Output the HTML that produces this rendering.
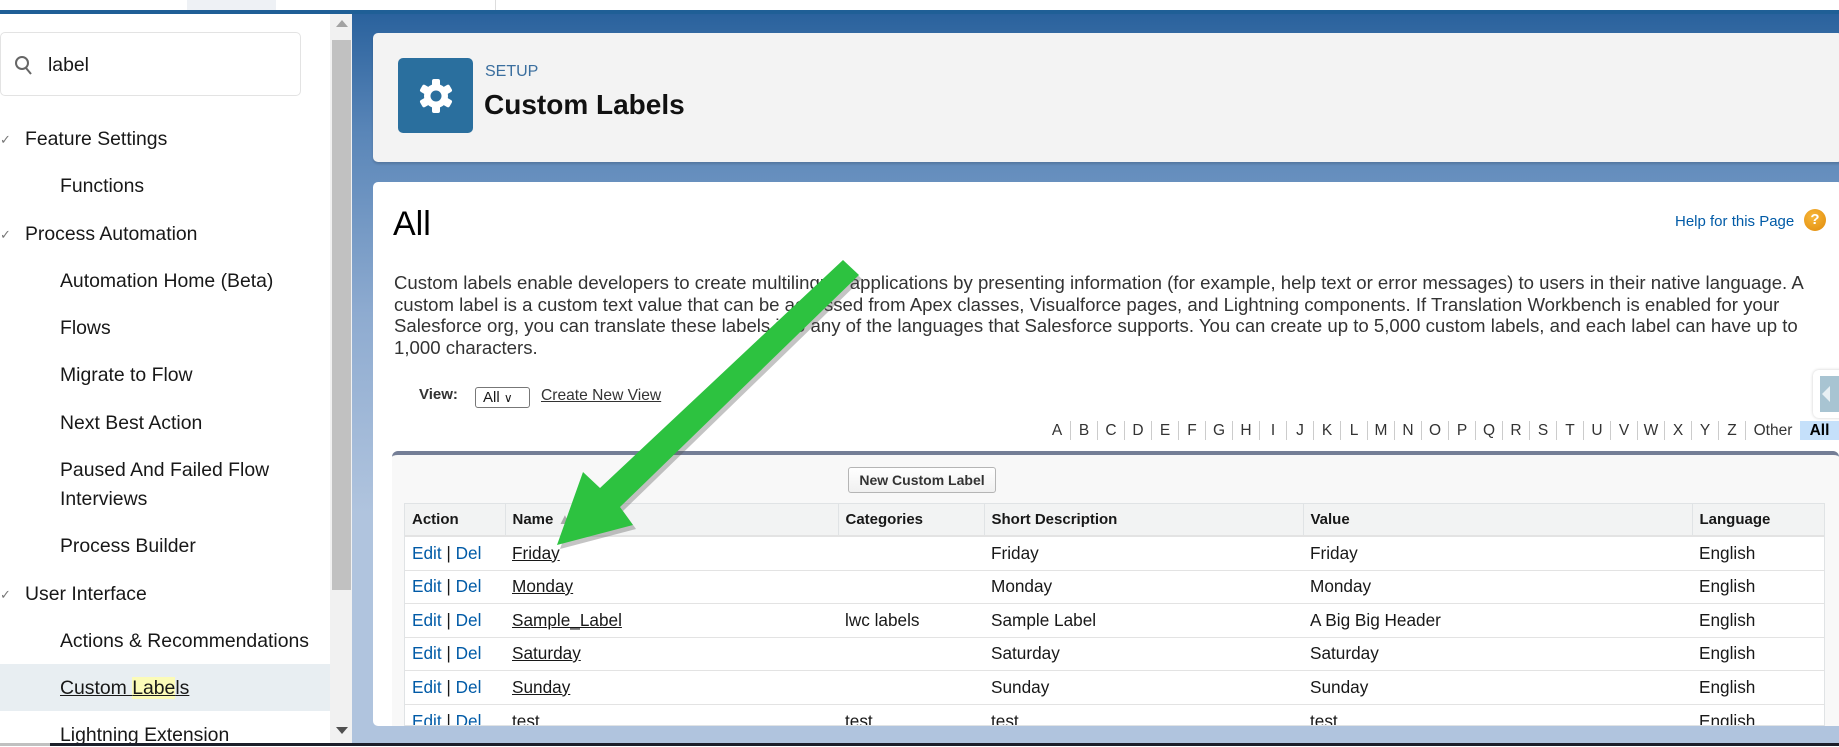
<!DOCTYPE html>
<html><head><meta charset="utf-8"><style>
*{margin:0;padding:0;box-sizing:border-box}
body{width:1839px;height:746px;overflow:hidden;position:relative;font-family:"Liberation Sans",Arial,sans-serif;background:#fff;color:#181818}
.abs{position:absolute}
.side{left:0;top:14px;width:330px;height:732px;background:#fff}
.si{position:absolute;font-size:19.4px;color:#181818;white-space:nowrap}
.chk{position:absolute;left:0;font-size:13px;color:#777}
.main{left:352px;top:14px;width:1487px;height:732px;background:linear-gradient(#2a629d 0px,#5a86b8 120px,#8eabd0 300px,#b0c4de 500px,#b0c4de 100%)}
table{border-collapse:collapse;font-size:17.2px}
td,th{text-align:left;padding-left:7px;white-space:nowrap}
a{color:#015ba7;text-decoration:none}
.u{text-decoration:underline;color:#181818}
.alpha{display:flex;font-size:15.5px;color:#333;line-height:19px;height:19px}
.alpha span{display:inline-block;width:27px;text-align:center;border-right:1px solid #ccc}
</style></head><body>
<div class="abs" style="left:0;top:0;width:1839px;height:10px;background:#fff"></div>
<div class="abs" style="left:187px;top:0;width:89px;height:10px;background:#eef1f5"></div>
<div class="abs" style="left:495px;top:0;width:1px;height:10px;background:#ddd"></div>
<div class="abs" style="left:0;top:10px;width:1839px;height:4px;background:#1f5f96"></div>

<div class="abs side">
  <div class="abs" style="left:0;top:18px;width:301px;height:64px;border:1px solid #e3e3e3;border-radius:5px"></div>
  <svg class="abs" style="left:14px;top:41px" width="20" height="22" viewBox="0 0 20 22"><circle cx="8" cy="8" r="6" fill="none" stroke="#666" stroke-width="2"/><line x1="12" y1="13" x2="17" y2="19" stroke="#666" stroke-width="2"/></svg>
  <div class="si" style="left:48px;top:40px">label</div>
  <div class="abs" style="left:0;top:650px;width:330px;height:47px;background:#e8eef2"></div>
</div>
<div class="abs" style="left:0;top:16px;width:330px;height:730px">
  <span class="chk" style="top:116px">✓</span><div class="si" style="left:25px;top:112px">Feature Settings</div>
  <div class="si" style="left:60px;top:159px">Functions</div>
  <span class="chk" style="top:211px">✓</span><div class="si" style="left:25px;top:207px">Process Automation</div>
  <div class="si" style="left:60px;top:254px">Automation Home (Beta)</div>
  <div class="si" style="left:60px;top:301px">Flows</div>
  <div class="si" style="left:60px;top:348px">Migrate to Flow</div>
  <div class="si" style="left:60px;top:396px">Next Best Action</div>
  <div class="si" style="left:60px;top:443px">Paused And Failed Flow</div>
  <div class="si" style="left:60px;top:472px">Interviews</div>
  <div class="si" style="left:60px;top:519px">Process Builder</div>
  <span class="chk" style="top:571px">✓</span><div class="si" style="left:25px;top:567px">User Interface</div>
  <div class="si" style="left:60px;top:614px">Actions &amp; Recommendations</div>
  <div class="si" style="left:60px;top:661px;text-decoration:underline">Custom <span style="background:#fbfbb8">Labe</span>ls</div>
  <div class="si" style="left:60px;top:708px">Lightning Extension</div>
</div>
<div class="abs" style="left:330px;top:14px;width:23px;height:732px;background:#f1f1f1"></div>
<div class="abs" style="left:332px;top:40px;width:19px;height:550px;background:#c1c1c1"></div>
<div class="abs" style="left:336px;top:20px;width:0;height:0;border-left:6px solid transparent;border-right:6px solid transparent;border-bottom:7px solid #a3a3a3"></div>
<div class="abs" style="left:336px;top:727px;width:0;height:0;border-left:6px solid transparent;border-right:6px solid transparent;border-top:7px solid #505050"></div>

<div class="abs main"></div>
<div class="abs" style="left:0;top:743px;width:1839px;height:3px;background:#1c1f2a"></div>
<div class="abs" style="left:0;top:743px;width:50px;height:3px;background:#c0c0c0"></div>

<div class="abs" style="left:373px;top:33px;width:1470px;height:129px;background:#f3f3f3;border-radius:5px;box-shadow:0 2px 2px rgba(0,0,0,.15)"></div>
<div class="abs" style="left:398px;top:58px;width:75px;height:75px;background:#2a6f9e;border-radius:5px"></div>
<svg class="abs" style="left:416px;top:76px" width="40" height="40" viewBox="0 0 40 40"><g fill="#fff"><circle cx="20" cy="20" r="12"/><rect x="16" y="3" width="8" height="34" rx="2"/><rect x="16" y="3" width="8" height="34" rx="2" transform="rotate(60 20 20)"/><rect x="16" y="3" width="8" height="34" rx="2" transform="rotate(120 20 20)"/></g><circle cx="20" cy="20" r="5.5" fill="#2a6f9e"/></svg>
<div class="abs" style="left:485px;top:63px;font-size:16px;color:#3a6e9e">SETUP</div>
<div class="abs" style="left:484px;top:89px;font-size:28px;font-weight:bold;color:#111">Custom Labels</div>

<div class="abs" style="left:373px;top:182px;width:1470px;height:544px;background:#fff;border-radius:5px"></div>
<div class="abs" style="left:393px;top:205px;font-size:34px;color:#000">All</div>
<div class="abs" style="left:1675px;top:213px;font-size:15px;color:#015ba7">Help for this Page</div>
<div class="abs" style="left:1804px;top:209px;width:22px;height:22px;border-radius:50%;background:radial-gradient(circle at 40% 35%,#f7b73a,#e08a0a);color:#fff;font-weight:bold;font-size:15px;text-align:center;line-height:22px">?</div>
<div class="abs" style="left:394px;top:272px;font-size:18.6px;line-height:21.7px;color:#333;white-space:nowrap">Custom labels enable developers to create multilingual applications by presenting information (for example, help text or error messages) to users in their native language. A<br>custom label is a custom text value that can be accessed from Apex classes, Visualforce pages, and Lightning components. If Translation Workbench is enabled for your<br>Salesforce org, you can translate these labels into any of the languages that Salesforce supports. You can create up to 5,000 custom labels, and each label can have up to<br>1,000 characters.</div>

<div class="abs" style="left:419px;top:386px;font-size:15px;font-weight:bold;color:#333">View:</div>
<div class="abs" style="left:475px;top:387px;width:55px;height:21px;border:1px solid #777;border-radius:3px;font-size:15px;padding-left:7px;line-height:19px">All <span style="font-size:12px">&#x2228;</span></div>
<div class="abs" style="left:541px;top:387px;font-size:15.6px;color:#333;text-decoration:underline">Create New View</div>

<div class="abs" style="left:1813px;top:370px;width:30px;height:48px;background:#fff;border-radius:6px 0 0 6px;box-shadow:0 0 3px rgba(0,0,0,.2)"></div>
<div class="abs" style="left:1820px;top:376px;width:19px;height:36px;background:#a8c4d2"></div>
<div class="abs" style="left:1822px;top:386px;width:0;height:0;border-top:8px solid transparent;border-bottom:8px solid transparent;border-right:8px solid #e8f0f4"></div>

<div class="abs alpha" style="left:1044px;top:421px">
<span>A</span><span>B</span><span>C</span><span>D</span><span>E</span><span>F</span><span>G</span><span>H</span><span>I</span><span>J</span><span>K</span><span>L</span><span>M</span><span>N</span><span>O</span><span>P</span><span>Q</span><span>R</span><span>S</span><span>T</span><span>U</span><span>V</span><span>W</span><span>X</span><span>Y</span><span>Z</span><span style="width:54px;border:none">Other</span><span style="width:39px;border:none;background:#c5e0fa;font-weight:bold;color:#000">All</span></div>

<div class="abs" style="left:392px;top:451px;width:1447px;height:275px;background:#f8f8f8;border-top:4px solid #747e96;border-radius:6px 6px 0 0"></div>
<div class="abs" style="left:848px;top:467px;width:148px;height:26px;border:1px solid #b5b5b5;border-radius:3px;background:linear-gradient(#fff,#f0f0f0);font-size:14px;font-weight:bold;text-align:center;line-height:24px;color:#333">New Custom Label</div>
<div class="abs" style="left:404px;top:503px;width:1421px;height:223px;overflow:hidden;background:#fff;border:1px solid #e0e3e5">
<table style="width:1421px">
<colgroup><col style="width:100px"><col style="width:333px"><col style="width:146px"><col style="width:319px"><col style="width:389px"><col></colgroup>
<tr style="height:32px;background:#f2f3f3;font-size:15px"><th style="border-right:1px solid #e0e3e5">Action</th><th style="border-right:1px solid #e0e3e5">Name <span style="color:#aaa">&#9650;</span></th><th style="border-right:1px solid #e0e3e5">Categories</th><th style="border-right:1px solid #e0e3e5">Short Description</th><th style="border-right:1px solid #e0e3e5">Value</th><th>Language</th></tr>
<tr style="height:34px;border-top:2px solid #e3e3e3"><td><a>Edit</a> | <a>Del</a></td><td><span class="u">Friday</span></td><td></td><td>Friday</td><td>Friday</td><td>English</td></tr>
<tr style="height:33px;border-top:1px solid #e3e3e3"><td><a>Edit</a> | <a>Del</a></td><td><span class="u">Monday</span></td><td></td><td>Monday</td><td>Monday</td><td>English</td></tr>
<tr style="height:34px;border-top:1px solid #e3e3e3"><td><a>Edit</a> | <a>Del</a></td><td><span class="u">Sample_Label</span></td><td>lwc labels</td><td>Sample Label</td><td>A Big Big Header</td><td>English</td></tr>
<tr style="height:33px;border-top:1px solid #e3e3e3"><td><a>Edit</a> | <a>Del</a></td><td><span class="u">Saturday</span></td><td></td><td>Saturday</td><td>Saturday</td><td>English</td></tr>
<tr style="height:34px;border-top:1px solid #e3e3e3"><td><a>Edit</a> | <a>Del</a></td><td><span class="u">Sunday</span></td><td></td><td>Sunday</td><td>Sunday</td><td>English</td></tr>
<tr style="height:34px;border-top:1px solid #e3e3e3"><td><a>Edit</a> | <a>Del</a></td><td>test</td><td>test</td><td>test</td><td>test</td><td>English</td></tr>
</table></div>
<div class="abs" style="left:352px;top:726px;width:1487px;height:17px;background:#b0c4de"></div>

<svg class="abs" style="left:0;top:0" width="1839" height="746">
<polygon points="843,260 859,275 620,507 633,525 557,545 583,472 600,488" fill="#555" opacity=".35" transform="translate(3,4)"/>
<polygon points="843,260 859,275 620,507 633,525 557,545 583,472 600,488" fill="#2dc240"/>
</svg>
</body></html>
